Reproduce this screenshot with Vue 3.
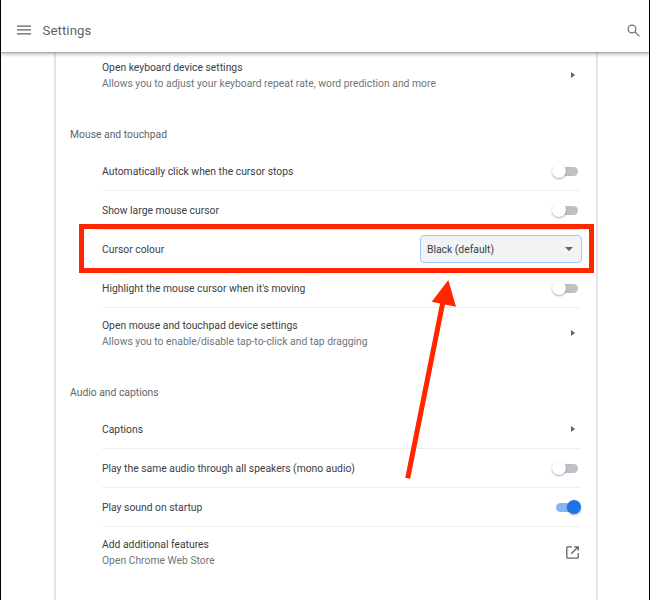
<script setup>
const mouseRows = [
  { label: 'Automatically click when the cursor stops', kind: 'toggle' },
  { label: 'Show large mouse cursor', kind: 'toggle' },
  { label: 'Cursor colour', kind: 'select' },
  { label: "Highlight the mouse cursor when it's moving", kind: 'toggle' },
  { label: 'Open mouse and touchpad device settings', sub: 'Allows you to enable/disable tap-to-click and tap dragging', kind: 'arrow' },
]
const audioRows = [
  { label: 'Captions', kind: 'arrow' },
  { label: 'Play the same audio through all speakers (mono audio)', kind: 'toggle' },
  { label: 'Play sound on startup', kind: 'toggle', on: true },
  { label: 'Add additional features', sub: 'Open Chrome Web Store', kind: 'external' },
]
</script>

<template>
  <div class="page">
    <header class="topbar">
      <svg class="menu" width="14" height="10" viewBox="0 0 14 10"><path d="M0 0.5h14v1.3H0zM0 4.3h14v1.3H0zM0 8.2h14v1.3H0z" fill="#5f6368" /></svg>
      <span class="title">Settings</span>
      <svg class="search" width="13" height="13" viewBox="0 0 13 13" fill="none" stroke="#70757a" stroke-width="1.3"><circle cx="5" cy="5" r="3.9" /><path d="M8 8l4.4 4.4" /></svg>
    </header>
    <main class="card">
      <div class="row two first">
        <div class="text"><div class="label">Open keyboard device settings</div><div class="sub">Allows you to adjust your keyboard repeat rate, word prediction and more</div></div>
        <span class="arrow"></span>
      </div>

      <h2 class="section mouse">Mouse and touchpad</h2>
      <div v-for="r in mouseRows" :key="r.label" class="row" :class="{ two: r.sub }">
        <div class="text"><div class="label">{{ r.label }}</div><div v-if="r.sub" class="sub">{{ r.sub }}</div></div>
        <span v-if="r.kind === 'toggle'" class="toggle"><span class="knob"></span></span>
        <span v-else-if="r.kind === 'arrow'" class="arrow"></span>
        <div v-else class="select"><span>Black (default)</span><span class="caret"></span></div>
      </div>

      <h2 class="section audio">Audio and captions</h2>
      <div v-for="r in audioRows" :key="r.label" class="row" :class="{ two: r.sub }">
        <div class="text"><div class="label">{{ r.label }}</div><div v-if="r.sub" class="sub">{{ r.sub }}</div></div>
        <span v-if="r.kind === 'toggle'" class="toggle" :class="{ on: r.on }"><span class="knob"></span></span>
        <span v-else-if="r.kind === 'arrow'" class="arrow"></span>
        <svg v-else class="ext" width="13" height="13" viewBox="0 0 13 13" fill="none" stroke="#5f6368" stroke-width="1.3"><path d="M6 0.8H1.6a.8.8 0 0 0-.8.8v9.8a.8.8 0 0 0 .8.8h9.8a.8.8 0 0 0 .8-.8V7" /><path d="M8.2 0.8h4v4M12 1L5.2 7.8" /></svg>
      </div>
    </main>
    <div class="highlight"></div>
    <svg class="pointer" width="60" height="210" viewBox="0 0 60 210"><path d="M6.7 203.3L41.7 28" stroke="#ff2600" stroke-width="5" fill="none" /><path d="M47.3 5L30.7 26.7L55 31.7Z" fill="#ff2600" /></svg>
    <div class="edge left"></div>
    <div class="edge right"></div>
  </div>
</template>

<style scoped>
.page { position: relative; width: 650px; height: 600px; overflow: hidden; background: #fff; font-family: Roboto, "Liberation Sans", sans-serif; font-size: 10.35px; color: #3c4043; }
.topbar { position: relative; z-index: 2; box-sizing: border-box; height: 53px; padding: 8px 11px 0 17px; display: flex; align-items: center; background: #fff; border-bottom: 1px solid #a8a8a8; box-shadow: 0 1px 4px rgba(0,0,0,.3); }
.menu { flex: none; }
.title { margin-left: 11.5px; font-size: 13.2px; color: #5f6368; letter-spacing: .1px; }
.search { margin-left: auto; margin-right: -1px; }
.card { box-sizing: border-box; width: 544px; height: 547px; margin-left: 54px; padding: 0 16px 0 46px; border-left: 2px solid #e4e4e4; border-right: 2px solid #e4e4e4; }
.row { box-sizing: border-box; height: 39px; display: flex; align-items: center; justify-content: space-between; border-bottom: 1px solid #eeeeee; }
.row:last-child, .first { border-bottom: 0; }
.row.two { height: 50px; border-bottom: 0; }
.first.row.two { height: 44px; }
.text { padding-top: 1px; }
.label { font-size: 10.35px; line-height: 16px; color: #3c4043; }
.sub { font-size: 10.35px; line-height: 16px; color: #70757a; }
.section { margin: 0 0 0 -32px; font-size: 10.35px; font-weight: 400; line-height: 16px; color: #5f6368; }
.section.mouse { padding: 30px 0 9px; }
.section.audio { padding: 27px 0 9px; }
.arrow { width: 0; height: 0; margin-right: 5px; border-left: 4px solid #5f6368; border-top: 3.5px solid transparent; border-bottom: 3.5px solid transparent; }
.toggle { position: relative; width: 23px; height: 9px; margin-right: 2px; border-radius: 5px; background: #bdc1c6; }
.knob { position: absolute; left: -3px; top: -2.5px; width: 14px; height: 14px; border-radius: 50%; background: #fff; box-shadow: 0 1px 2px rgba(0,0,0,.35); }
.toggle.on { background: #8ab4f8; margin-right: 1px; }
.toggle.on .knob { left: 10.5px; background: #1a73e8; }
.select { box-sizing: border-box; width: 162px; height: 28px; margin-right: -2px; padding: 0 8px 0 6px; display: flex; align-items: center; justify-content: space-between; background: #f1f3f4; border: 1.5px solid #a3c6f9; border-radius: 4px; color: #3c4043; }
.caret { width: 0; height: 0; border-top: 4px solid #5f6368; border-left: 4px solid transparent; border-right: 4px solid transparent; }
.ext { margin-right: 1px; }
.highlight { position: absolute; z-index: 1; left: 78.5px; top: 224px; width: 515.5px; height: 49px; box-sizing: border-box; border: 5px solid #ff2600; }
.pointer { position: absolute; z-index: 1; left: 401px; top: 275px; }
.edge { position: absolute; z-index: 3; top: 0; bottom: 0; background: #000; }
.edge.left { left: 0; width: 1px; }
.edge.right { right: 0; width: 1px; }
</style>
